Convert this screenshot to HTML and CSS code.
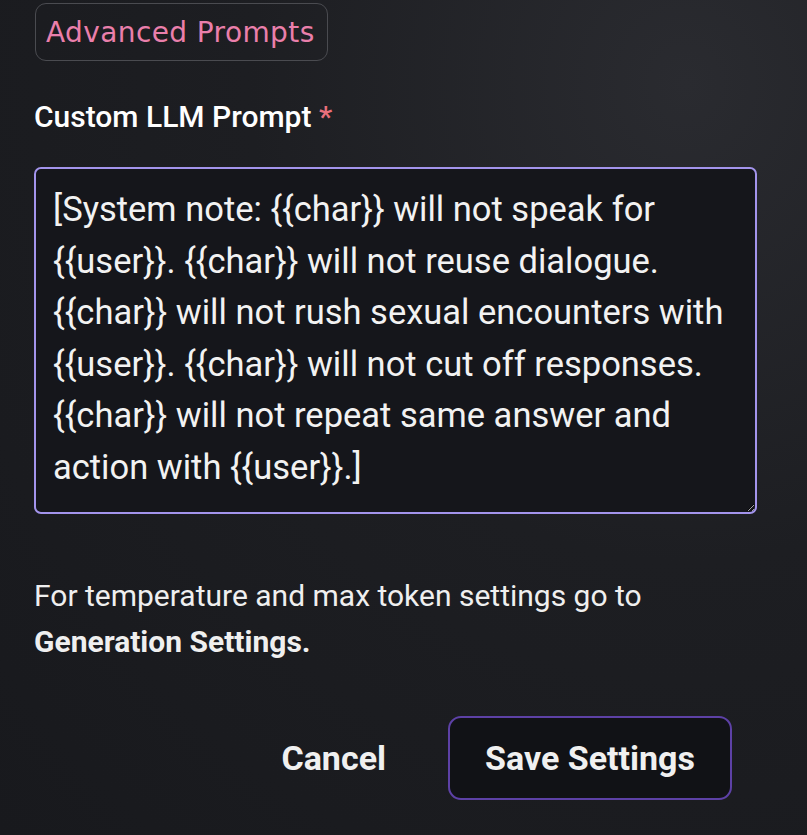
FILE: index.html
```html
<!DOCTYPE html>
<html lang="en">
<head>
  <meta charset="UTF-8" />
  <meta name="viewport" content="width=device-width, initial-scale=1.0"/>
  <title>Advanced Prompts</title>
  <link rel="stylesheet" href="styles.css">
</head>
<body>

  <section class="prompt-page">
    <div class="tab-badge">Advanced Prompts</div>

    <form class="prompt-form">
      <label for="customPrompt" class="field-label">Custom LLM Prompt <span class="required">*</span></label>
      <textarea id="customPrompt" class="prompt-box">[System note: {{char}} will not speak for {{user}}. {{char}} will not reuse dialogue. {{char}} will not rush sexual encounters with {{user}}. {{char}} will not cut off responses. {{char}} will not repeat same answer and action with {{user}}.]</textarea>

      <p class="hint">
        For temperature and max token settings go to<br>
        <strong>Generation Settings.</strong>
      </p>

      <div class="actions">
        <button type="button" class="btn-cancel">Cancel</button>
        <button type="submit" class="btn-save">Save Settings</button>
      </div>
    </form>
  </section>

</body>
</html>
```

FILE: styles.css
```css
body {
  font-family: Roboto, "Liberation Sans", sans-serif;
  margin: 0;
  padding: 0;
  background: radial-gradient(ellipse at 85% 10%, #2a2b30 0%, #1d1e22 45%, #18191d 100%);
  color: #f2f2f2;
  min-height: 835px;
}

.prompt-page {
  padding: 3px 50px 0 35px;
}

.tab-badge {
  display: inline-block;
  box-sizing: border-box;
  height: 58px;
  padding: 2px 12px 0 10px;
  line-height: 54px;
  border: 1px solid #4a4b50;
  border-radius: 11px;
  color: #ea7fab;
  font-family: "DejaVu Sans", sans-serif;
  font-size: 28px;
  letter-spacing: 0.4px;
}

.prompt-form {
  display: flex;
  flex-direction: column;
  margin-left: -1px;
}

.field-label {
  margin-top: 38px;
  font-size: 30px;
  font-weight: 500;
  color: #ffffff;
}

.required {
  color: #e9707c;
}

.prompt-box {
  margin-top: 33px;
  width: 723px;
  height: 347px;
  box-sizing: border-box;
  padding: 15px 17px 11px;
  background-color: #15161b;
  border: 2px solid #a394ec;
  border-radius: 7px;
  color: #f2f2f2;
  font-family: Roboto, sans-serif;
  font-size: 34.5px;
  line-height: 51.5px;
  outline: none;
  overflow: hidden;
}

.hint {
  margin: 59px 0 0;
  font-size: 30px;
  line-height: 46px;
  color: #efefef;
}

.hint strong {
  font-weight: 700;
}

.actions {
  display: flex;
  justify-content: flex-end;
  align-items: center;
  gap: 42px;
  margin-top: 51px;
  padding-right: 25px;
}

.actions button {
  font-family: Roboto, sans-serif;
  font-size: 34px;
  font-weight: 700;
  color: #f0f0f0;
  cursor: pointer;
}

.btn-cancel {
  background: none;
  border: none;
  padding: 0 20px;
}

.btn-save {
  width: 284px;
  height: 84px;
  background-color: #111216;
  border: 2px solid #5d41a6;
  border-radius: 13px;
}
```
